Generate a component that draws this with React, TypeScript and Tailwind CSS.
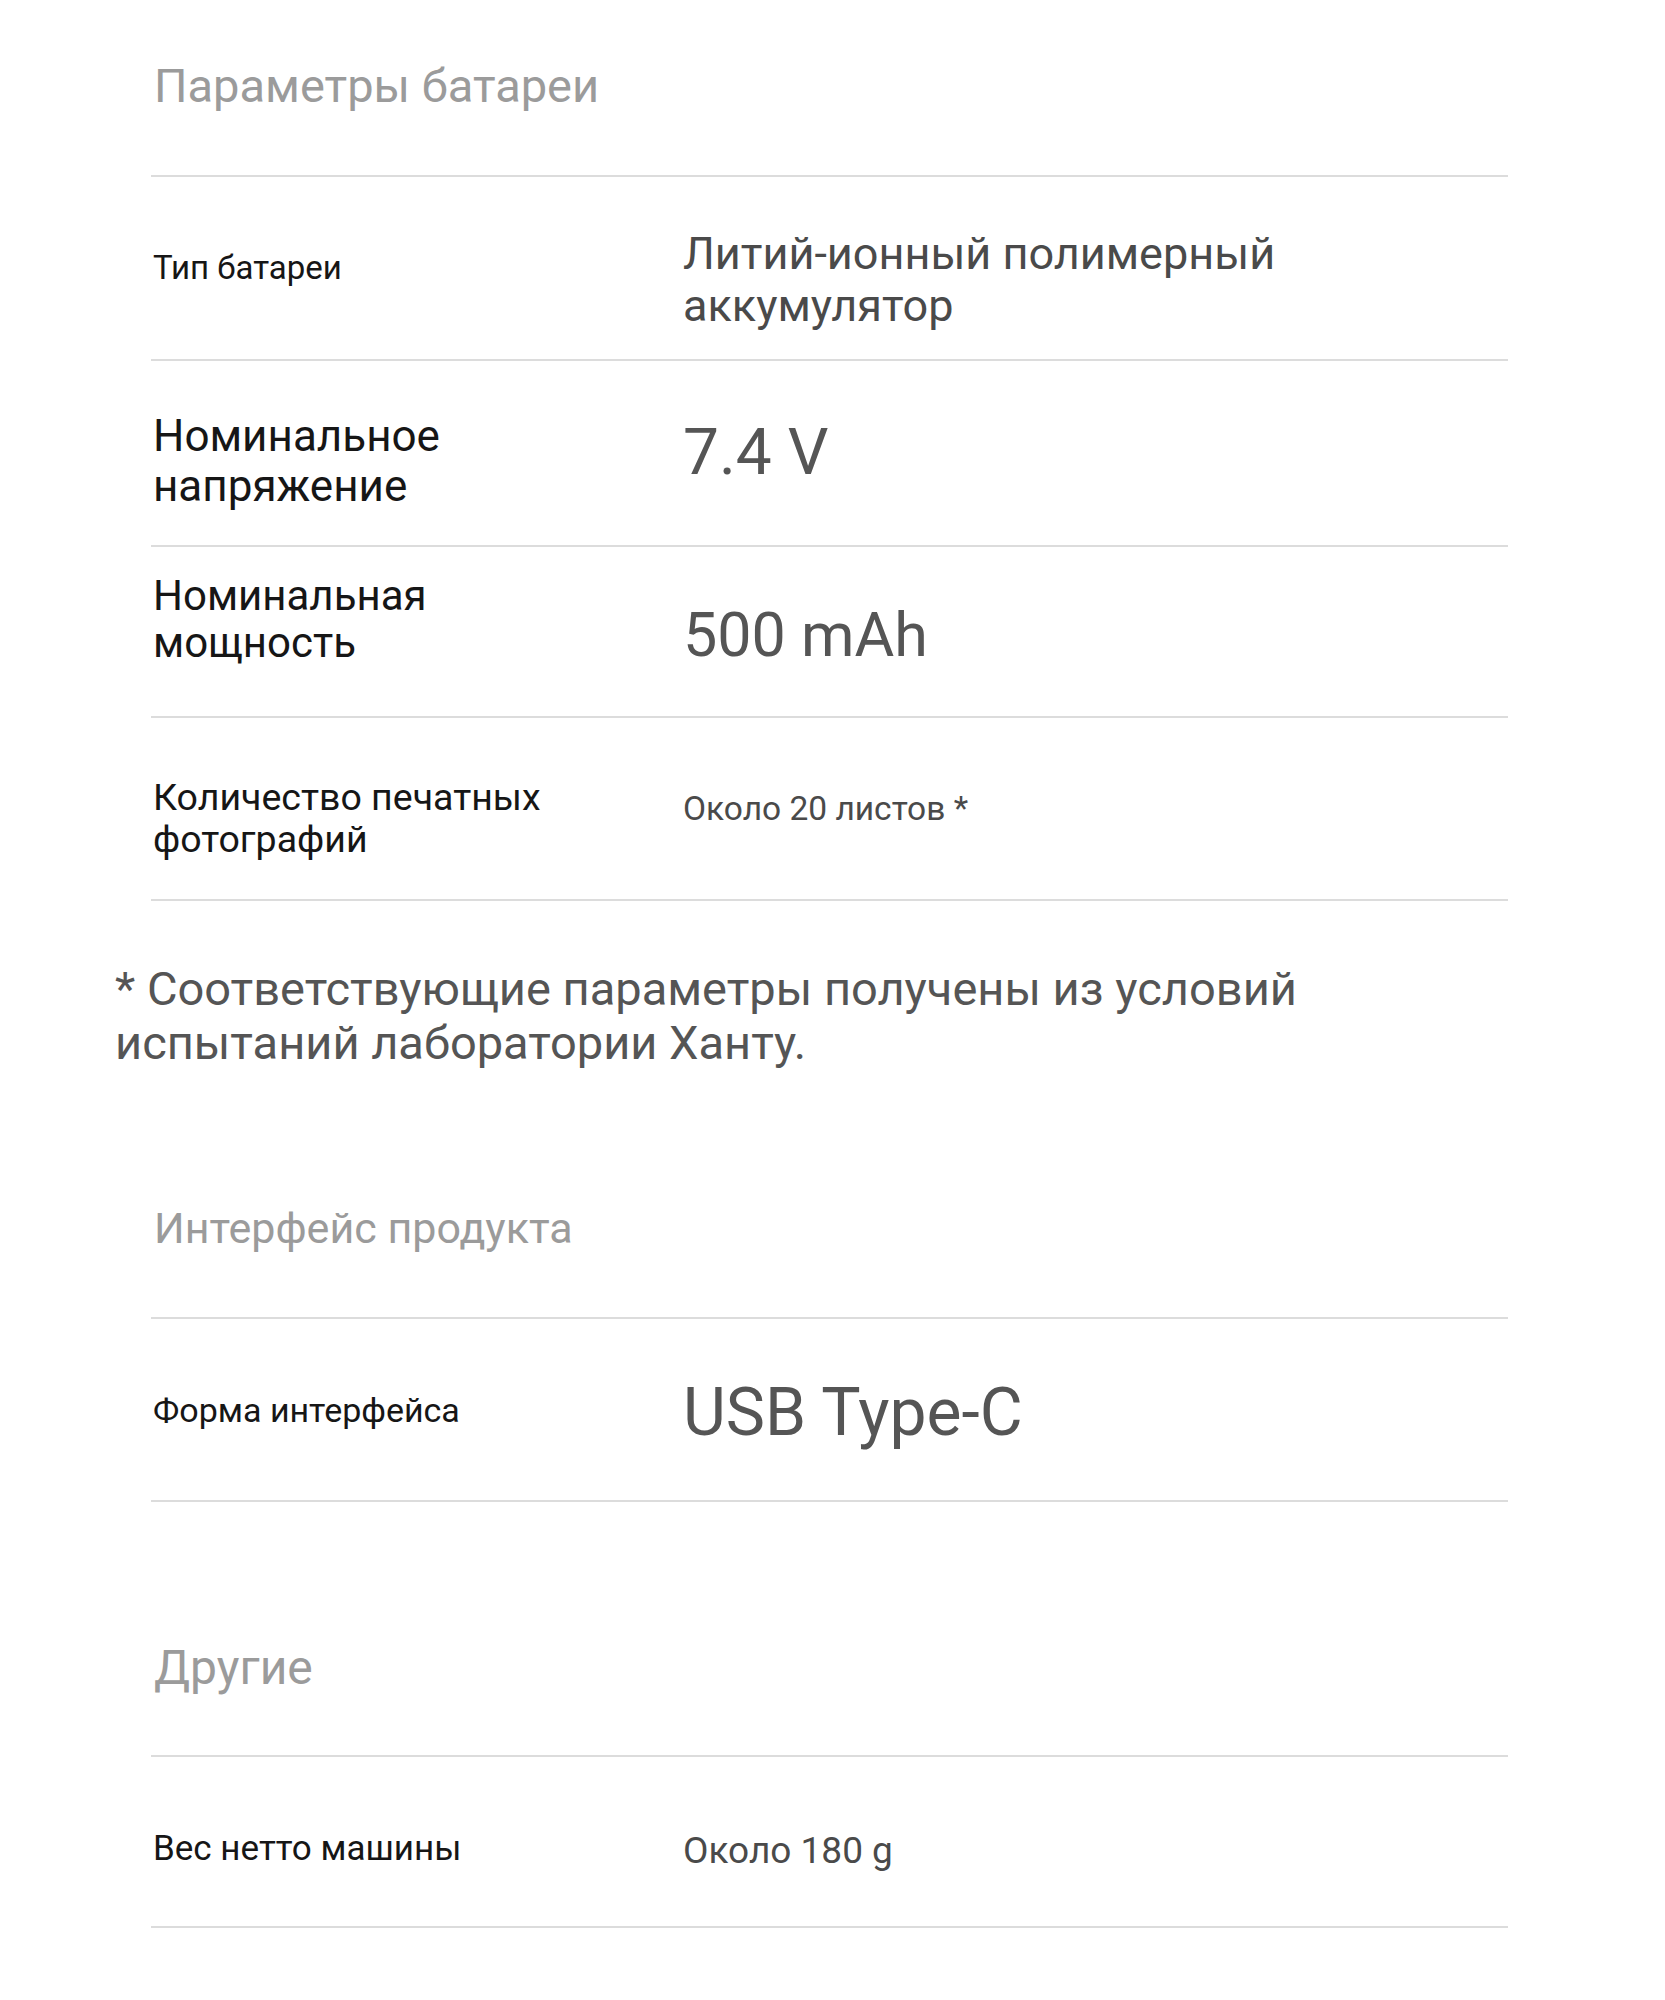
const FONT = "font-['Roboto','Liberation_Sans',sans-serif]";

interface Row {
  label: string[];
  value: string[];
  h: string;
  labelCls: string;
  valueCls: string;
}

const BATTERY: Row[] = [
  {
    label: ["Тип батареи"],
    value: ["Литий-ионный полимерный", "аккумулятор"],
    h: "h-[184px]",
    labelCls: "text-[33px] leading-[40px] text-[#161616]",
    valueCls: "text-[45px] leading-[52px] text-[#4a4a4a] pt-[24px]",
  },
  {
    label: ["Номинальное", "напряжение"],
    value: ["7.4 V"],
    h: "h-[186px]",
    labelCls: "text-[44px] leading-[50px] text-[#161616] pt-[16px]",
    valueCls: "text-[64px] leading-[70px] text-[#555555]",
  },
  {
    label: ["Номинальная", "мощность"],
    value: ["500 mAh"],
    h: "h-[171px]",
    labelCls: "text-[42px] leading-[47px] text-[#161616] pb-[26px]",
    valueCls: "text-[61px] leading-[68px] text-[#555555] pt-[6px]",
  },
  {
    label: ["Количество печатных", "фотографий"],
    value: ["Около 20 листов *"],
    h: "h-[183px]",
    labelCls: "text-[37.5px] leading-[42px] text-[#161616] pt-[18px]",
    valueCls: "text-[33.5px] leading-[40px] text-[#4a4a4a]",
  },
];

function SpecRow({ row }: { row: Row }) {
  return (
    <div className={`flex items-center border-b-2 border-[#dcdcdc] ${row.h}`}>
      <div className={`w-[532px] shrink-0 pl-[2px] ${row.labelCls}`}>
        {row.label.map((l) => (
          <div key={l}>{l}</div>
        ))}
      </div>
      <div className={row.valueCls}>
        {row.value.map((v) => (
          <div key={v}>{v}</div>
        ))}
      </div>
    </div>
  );
}

function SectionTitle({ title, h, size }: { title: string; h: string; size: string }) {
  return (
    <div className={`flex items-center border-b-2 border-[#dcdcdc] ${h}`}>
      <h2 className={`pl-[3px] leading-[56px] text-[#9b9b9b] font-normal ${size}`}>{title}</h2>
    </div>
  );
}

export default function App() {
  return (
    <div className={`w-[1665px] h-[2000px] bg-white ${FONT}`}>
      <div className="pl-[151px] w-[1508px]">
        <SectionTitle title="Параметры батареи" h="h-[177px] pb-[4px]" size="text-[47px]" />
        {BATTERY.map((r) => (
          <SpecRow key={r.label.join(" ")} row={r} />
        ))}
      </div>

      {/* сноска */}
      <p className="pl-[115px] pt-[61px] text-[47px] leading-[54px] text-[#555555] w-[1500px]">
        * Соответствующие параметры получены из условий
        <br />
        испытаний лаборатории Ханту.
      </p>

      <div className="pl-[151px] w-[1508px] mt-[68px]">
        <SectionTitle title="Интерфейс продукта" h="h-[181px]" size="text-[43px]" />
        <SpecRow
          row={{
            label: ["Форма интерфейса"],
            value: ["USB Type-C"],
            h: "h-[183px]",
            labelCls: "text-[34px] leading-[40px] text-[#161616]",
            valueCls: "text-[66px] leading-[72px] text-[#555555] pt-[6px]",
          }}
        />
        <SectionTitle title="Другие" h="h-[255px] pt-[78px]" size="text-[48px]" />
        <SpecRow
          row={{
            label: ["Вес нетто машины"],
            value: ["Около 180 g"],
            h: "h-[171px]",
            labelCls: "text-[35px] leading-[40px] text-[#161616] pt-[14px]",
            valueCls: "text-[37px] leading-[42px] text-[#4a4a4a] pt-[18px]",
          }}
        />
      </div>
    </div>
  );
}
